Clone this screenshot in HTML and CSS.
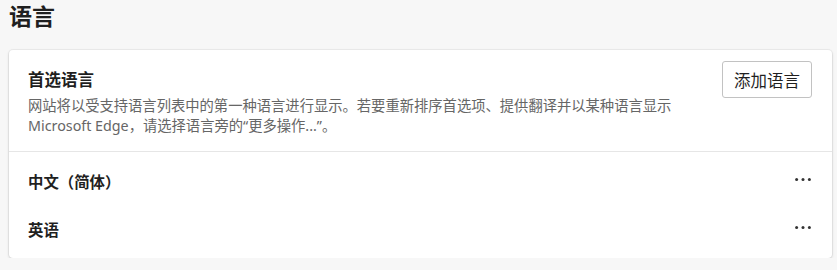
FILE: index.html
```html
<!DOCTYPE html>
<html lang="zh-CN">
<head>
<meta charset="utf-8">
<title>语言</title>
<link rel="stylesheet" href="styles.css">
</head>
<body>
<h1 class="page-title">语言</h1>
<section class="card">
  <div class="card-head">
    <div class="head-text">
      <h2 class="head-title">首选语言</h2>
      <p class="head-desc">网站将以受支持语言列表中的第一种语言进行显示。若要重新排序首选项、提供翻译并以某种语言显示 Microsoft Edge，请选择语言旁的“更多操作...”。</p>
    </div>
    <button class="add-btn" type="button">添加语言</button>
  </div>
  <div class="lang-list">
    <div class="lang-row">
      <span class="lang-name">中文（简体）</span>
      <svg class="more" width="16" height="16" viewBox="0 0 16 16"><circle cx="1.6" cy="6.5" r="1.5"/><circle cx="8" cy="6.5" r="1.5"/><circle cx="14.4" cy="6.5" r="1.5"/></svg>
    </div>
    <div class="lang-row">
      <span class="lang-name">英语</span>
      <svg class="more" width="16" height="16" viewBox="0 0 16 16"><circle cx="1.6" cy="6.5" r="1.5"/><circle cx="8" cy="6.5" r="1.5"/><circle cx="14.4" cy="6.5" r="1.5"/></svg>
    </div>
  </div>
</section>
</body>
</html>
```
FILE: styles.css
```css
html, body {
  margin: 0;
  background: #f7f7f7;
}
body {
  padding: 0 5px 0 9px;
  font-family: "Noto Sans", "Noto Sans CJK SC", sans-serif;
  color: #1f1f1f;
}
.page-title {
  margin: 0 0 20px 0;
  font-family: "Noto Sans CJK SC", sans-serif;
  font-size: 23px;
  line-height: 30px;
  font-weight: 700;
  color: #1f1f1f;
}
.card {
  background: #fff;
  border-radius: 4px;
  box-shadow: 0 0 0 1px rgba(0,0,0,0.04), 0 1px 3px rgba(0,0,0,0.16);
}
.card-head {
  display: flex;
  align-items: flex-start;
  gap: 24px;
  padding: 11px 20px 15px 19px;
  border-bottom: 1px solid #e6e6e6;
}
.head-text {
  flex: 1;
  margin-top: 7px;
}
.head-title {
  margin: 0;
  font-family: "Noto Sans CJK SC", sans-serif;
  font-size: 16.5px;
  line-height: 22px;
  font-weight: 700;
  color: #1f1f1f;
}
.head-desc {
  margin: 6px 0 0 0;
  font-size: 14.3px;
  line-height: 20px;
  color: #666;
}
.add-btn {
  width: 90px;
  height: 37px;
  flex: none;
  padding: 0;
  background: #fff;
  border: 1px solid #c2c2c2;
  border-radius: 3px;
  font-family: "Noto Sans CJK SC", sans-serif;
  font-size: 16.5px;
  color: #1f1f1f;
}
.lang-list {
  padding: 5px 0;
}
.lang-row {
  display: flex;
  align-items: center;
  justify-content: space-between;
  height: 48px;
  padding: 0 21px 0 19px;
}
.lang-name {
  font-family: "Noto Sans CJK SC", sans-serif;
  font-size: 15.4px;
  font-weight: 700;
  color: #1f1f1f;
}
.more {
  fill: #333;
}
```
